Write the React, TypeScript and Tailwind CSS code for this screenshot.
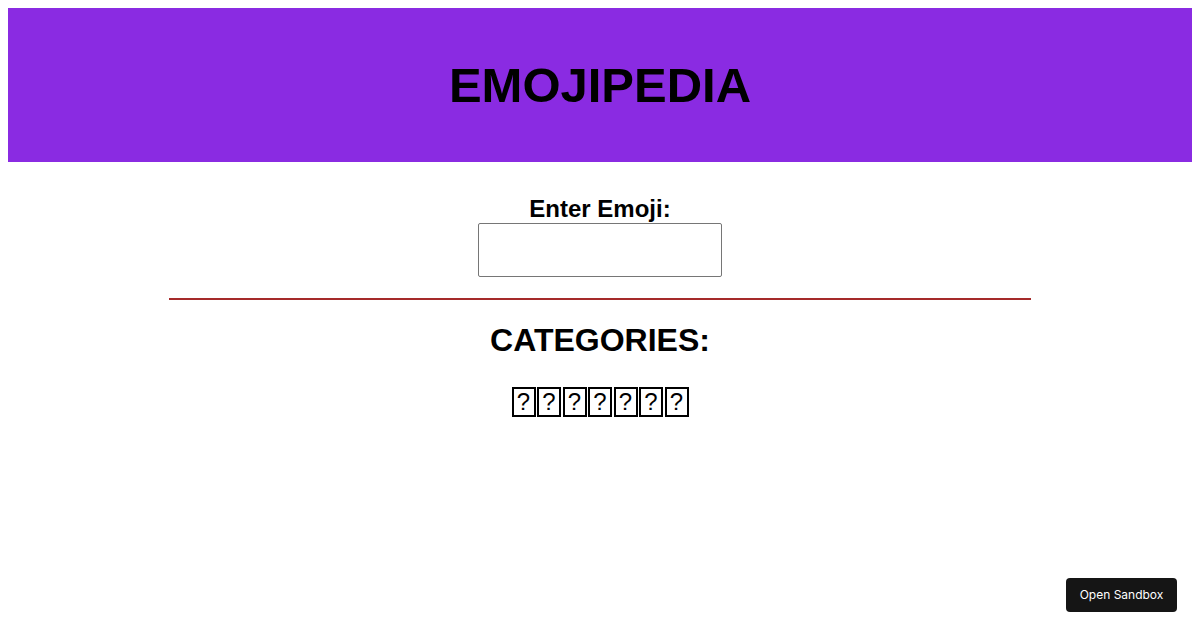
import React from "react";

const emojis = ["😀", "🐶", "🍎", "⚽", "🚗", "💡", "🏁"];

export default function App() {
  return (
    <div className="relative h-[630px] w-[1200px] bg-white p-2 font-['Liberation_Sans',Arial,sans-serif] text-black">
      <header className="flex h-[154px] items-center justify-center bg-[#8a2be2]">
        <h1 className="text-[49px] font-bold leading-none">EMOJIPEDIA</h1>
      </header>
      <div className="flex flex-col items-center">
        <label className="mt-[33px] text-[24px] font-bold leading-[28px]">Enter Emoji:</label>
        <input className="h-[54px] w-[244px] rounded-[2px] border border-[#767676] outline-none" />
        <div className="mt-[21px] h-[2px] w-[862px] bg-[#a52a2a]" />
        <h2 className="mt-[22px] text-[32px] font-bold leading-[37px]">CATEGORIES:</h2>
        <div className="mt-[28px] flex gap-[1.5px]" aria-label={emojis.join("")}>
          {emojis.map((e, i) => (
            <span
              key={i}
              title={e}
              className="flex h-[30px] w-[24px] items-center justify-center border-2 border-black text-[24px] leading-none"
            >
              ?
            </span>
          ))}
        </div>
      </div>
      <button className="absolute bottom-[18px] right-[23px] flex h-[34px] w-[111px] items-center justify-center rounded-[4px] bg-[#151515] font-['Inter',sans-serif] text-[12px] text-white">
        Open Sandbox
      </button>
    </div>
  );
}
